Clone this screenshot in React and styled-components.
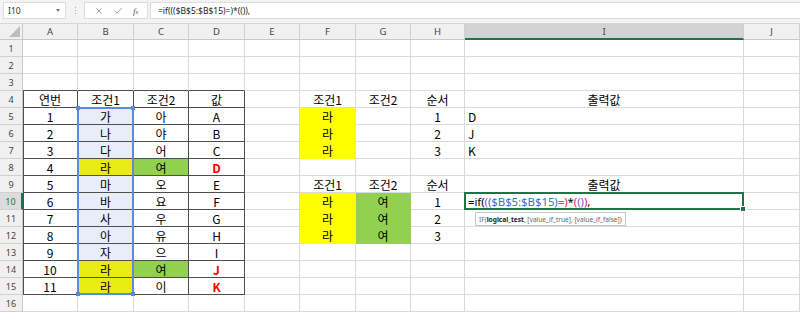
import styled, { createGlobalStyle } from "styled-components";
import { X, Check } from "lucide-react";

const GlobalStyle = createGlobalStyle`
  html, body {
    margin: 0;
    padding: 0;
    background: #fff;
    overflow: hidden;
  }
  body {
    font-family: "Noto Sans", "Noto Sans CJK KR", sans-serif;
  }
`;

const COLS = ["A", "B", "C", "D", "E", "F", "G", "H", "I", "J"];
const WIDTHS = [55, 56, 55, 56, 55, 56, 55, 54, 279, 56];
const ROWS = 16;

const GRID = "#dadada";
const TABLE_LINE = "#4f4f4f";
const YELLOW = "#ffff00";
const YELLOW_SEL = "#ebeb14";
const GREEN = "#92d050";
const BLUE_SEL = "#e8eef9";
const EXCEL_GREEN = "#217346";

const Page = styled.div`
  width: 800px;
  height: 313px;
  overflow: hidden;
  background: #fff;
`;

const FormulaBar = styled.div`
  display: flex;
  align-items: center;
  height: 24px;
  padding: 0 0 2px 3px;
  box-sizing: border-box;
  background: #f3f3f3;
  border-bottom: 1px solid #d6d6d6;
`;

const NameBox = styled.div`
  display: flex;
  align-items: center;
  justify-content: space-between;
  width: 63px;
  height: 17px;
  padding: 0 5px 0 4px;
  box-sizing: border-box;
  background: #fff;
  border: 1px solid #dcdcdc;
  font-family: "Noto Sans", sans-serif;
  font-size: 8.5px;
  color: #333;
`;

const Caret = styled.span`
  width: 0;
  height: 0;
  border-left: 2.5px solid transparent;
  border-right: 2.5px solid transparent;
  border-top: 3px solid #777;
`;

const Grip = styled.div`
  display: flex;
  flex-direction: column;
  align-items: center;
  justify-content: center;
  gap: 2px;
  width: 18px;
  & span {
    width: 1px;
    height: 1px;
    background: #a8a8a8;
  }
`;

const ButtonBox = styled.div`
  display: flex;
  align-items: center;
  justify-content: space-around;
  width: 64px;
  height: 17px;
  padding: 0 4px;
  box-sizing: border-box;
  background: #fff;
  border: 1px solid #dcdcdc;
  color: #6a6a6a;
`;

const Fx = styled.span`
  font-family: "Liberation Serif", serif;
  font-style: italic;
  font-size: 9px;
  color: #555;
  & small {
    font-size: 6px;
  }
`;

const FormulaInput = styled.div`
  flex: 1;
  display: flex;
  align-items: center;
  height: 17px;
  margin-left: 2px;
  padding-left: 7px;
  box-sizing: border-box;
  background: #fff;
  border: 1px solid #dcdcdc;
  border-right: none;
  font-family: "Noto Sans", sans-serif;
  font-size: 8.5px;
  color: #222;
`;

const Sheet = styled.div`
  display: grid;
  grid-template-columns: 23px ${WIDTHS.map((w) => `${w}px`).join(" ")};
  grid-template-rows: 16px repeat(${ROWS}, 17px);
`;

const Corner = styled.div`
  grid-column: 1;
  grid-row: 1;
  position: relative;
  background: #f0f0f0;
  border-right: 1px solid #c8c8c8;
  border-bottom: 1px solid #c8c8c8;
  box-sizing: border-box;
  &::after {
    content: "";
    position: absolute;
    right: 2px;
    bottom: 2px;
    border-left: 11px solid transparent;
    border-bottom: 11px solid #bdbdbd;
  }
`;

const ColHead = styled.div`
  grid-column: ${(p) => p.$c};
  grid-row: 1;
  display: flex;
  align-items: center;
  justify-content: center;
  background: ${(p) => (p.$active ? "#d3d3d3" : "#f0f0f0")};
  border-right: 1px solid #d0d0d0;
  border-bottom: ${(p) =>
    p.$active ? `2px solid ${EXCEL_GREEN}` : "1px solid #c8c8c8"};
  box-sizing: border-box;
  font-family: "Noto Sans", sans-serif;
  font-size: 9.5px;
  color: #444;
`;

const RowHead = styled.div`
  grid-column: 1;
  grid-row: ${(p) => p.$r};
  display: flex;
  align-items: center;
  justify-content: center;
  background: ${(p) => (p.$active ? "#dcdcdc" : "#f0f0f0")};
  border-right: ${(p) =>
    p.$active ? `2px solid ${EXCEL_GREEN}` : "1px solid #c8c8c8"};
  border-bottom: 1px solid #d0d0d0;
  box-sizing: border-box;
  font-family: "Noto Sans", sans-serif;
  font-size: 9px;
  color: ${(p) => (p.$active ? EXCEL_GREEN : "#444")};
`;

const Cell = styled.div`
  grid-column: ${(p) => p.$c};
  grid-row: ${(p) => p.$r};
  display: flex;
  align-items: center;
  justify-content: ${(p) => (p.$left ? "flex-start" : "center")};
  padding: 1px 3px 0;
  min-width: 0;
  box-sizing: border-box;
  white-space: nowrap;
  background: ${(p) => p.$fill};
  border-right: 1px solid ${(p) => p.$lineR};
  border-bottom: 1px solid ${(p) => p.$lineB};
  box-shadow: ${(p) => (p.$edge ? `inset 1px 0 0 ${TABLE_LINE}` : "none")};
  font-family: "Noto Sans CJK KR", "Noto Sans", sans-serif;
  font-size: 12px;
  font-weight: ${(p) => (p.$bold ? 700 : 400)};
  color: ${(p) => p.$color};
`;

const RangeMark = styled.div`
  grid-column: ${(p) => p.$col};
  grid-row: ${(p) => p.$rows};
  position: relative;
  margin: -1px 0 0 -1px;
  border: ${(p) => p.$width}px solid ${(p) => p.$color};
  pointer-events: none;
  z-index: 2;
`;

const Handle = styled.span`
  position: absolute;
  width: 4px;
  height: 4px;
  background: ${(p) => p.$color};
  ${(p) => (p.$top ? "top: -3px;" : "bottom: -3px;")}
  ${(p) => (p.$leftSide ? "left: -3px;" : "right: -3px;")}
  outline: ${(p) => (p.$ring ? "1px solid #fff" : "none")};
`;

const FormulaText = styled.span`
  font-family: "Noto Sans", "Noto Sans CJK KR", sans-serif;
  font-size: 11.5px;
  letter-spacing: -0.1px;
  & b {
    font-weight: 400;
  }
`;

const ArgTip = styled.div`
  grid-column: 10;
  grid-row: 12;
  align-self: start;
  justify-self: start;
  margin: 2px 0 0 10px;
  padding: 0 3px;
  height: 12px;
  display: flex;
  align-items: center;
  background: #fff;
  border: 1px solid #c6c6c6;
  font-family: "Noto Sans", sans-serif;
  font-size: 6.6px;
  color: #666;
  white-space: nowrap;
  z-index: 3;
  & strong {
    color: #222;
    font-weight: 700;
  }
`;

const FORMULA = [
  ["=if(", "#000"],
  ["(", "#8a4fc9"],
  ["(", "#3d6fd1"],
  ["$B$5:$B$15", "#3d6fd1"],
  [")", "#3d6fd1"],
  ["=", "#8a4fc9"],
  [")", "#e0245e"],
  ["*", "#000"],
  ["(", "#e0245e"],
  ["()", "#8a4fc9"],
  [")", "#e0245e"],
  [",", "#000"],
];

const data = {};
const put = (ref, v, opts = {}) => {
  data[ref] = { v, ...opts };
};

["연번", "조건1", "조건2", "값"].forEach((t, i) => put(`${COLS[i]}4`, t));
const colB = ["가", "나", "다", "라", "마", "바", "사", "아", "자", "라", "라"];
const colC = ["아", "야", "어", "여", "오", "요", "우", "유", "으", "여", "이"];
const colD = "ABCDEFGHIJK".split("");
colB.forEach((t, i) => {
  const r = i + 5;
  put(`A${r}`, i + 1);
  put(`B${r}`, t, { fill: t === "라" ? YELLOW_SEL : BLUE_SEL });
  put(`C${r}`, colC[i], colC[i] === "여" ? { fill: GREEN } : {});
  const red = ["D", "J", "K"].includes(colD[i]);
  put(`D${r}`, colD[i], red ? { color: "#ff0000", bold: true } : {});
});

[4, 9].forEach((r) => {
  put(`F${r}`, "조건1");
  put(`G${r}`, "조건2");
  put(`H${r}`, "순서");
  put(`I${r}`, "출력값");
});
["D", "J", "K"].forEach((t, i) => {
  put(`F${5 + i}`, "라", { fill: YELLOW });
  put(`H${5 + i}`, i + 1);
  put(`I${5 + i}`, t, { left: true });
});
[0, 1, 2].forEach((i) => {
  put(`F${10 + i}`, "라", { fill: YELLOW });
  put(`G${10 + i}`, "여", { fill: GREEN });
  put(`H${10 + i}`, i + 1);
});
put(
  "I10",
  <FormulaText>
    {FORMULA.map(([t, c], i) => (
      <b key={i} style={{ color: c }}>
        {t}
      </b>
    ))}
  </FormulaText>,
  { left: true }
);

const inTable = (r, ci) => r >= 4 && r <= 15 && ci >= 0 && ci <= 3;

function SheetCell({ r, ci }) {
  const ref = `${COLS[ci]}${r}`;
  const d = data[ref] || {};
  const fill = d.fill || "#fff";
  const lineR = inTable(r, ci) ? TABLE_LINE : d.fill ? fill : GRID;
  const lineB =
    inTable(r, ci) || inTable(r + 1, ci) ? TABLE_LINE : d.fill ? fill : GRID;
  return (
    <Cell
      $c={ci + 2}
      $r={r + 1}
      $fill={fill}
      $lineR={lineR}
      $lineB={lineB}
      $edge={ci === 0 && inTable(r, ci)}
      $left={d.left}
      $bold={d.bold}
      $color={d.color || "#000"}
    >
      {d.v}
    </Cell>
  );
}

export default function App() {
  const rows = Array.from({ length: ROWS }, (_, i) => i + 1);
  return (
    <Page>
      <GlobalStyle />
      <FormulaBar>
        <NameBox>
          I10
          <Caret />
        </NameBox>
        <Grip>
          <span />
          <span />
          <span />
        </Grip>
        <ButtonBox>
          <X size={10} strokeWidth={1.4} />
          <Check size={10} strokeWidth={1.6} />
          <Fx>
            f<small>x</small>
          </Fx>
        </ButtonBox>
        <FormulaInput>=if((($B$5:$B$15)=)*(()),</FormulaInput>
      </FormulaBar>

      <Sheet>
        <Corner />
        {COLS.map((c, ci) => (
          <ColHead key={c} $c={ci + 2} $active={c === "I"}>
            {c}
          </ColHead>
        ))}
        {rows.map((r) => [
          <RowHead key={`h${r}`} $r={r + 1} $active={r === 10}>
            {r}
          </RowHead>,
          ...COLS.map((c, ci) => <SheetCell key={`${c}${r}`} r={r} ci={ci} />),
        ])}

        <RangeMark $col={3} $rows="6 / 17" $width={2} $color="#5b8ad8">
          <Handle $top $leftSide $color="#5b8ad8" />
          <Handle $top $color="#5b8ad8" />
          <Handle $leftSide $color="#5b8ad8" />
          <Handle $color="#5b8ad8" />
        </RangeMark>

        <RangeMark $col={10} $rows="11 / 12" $width={2} $color={EXCEL_GREEN}>
          <Handle $color={EXCEL_GREEN} $ring />
        </RangeMark>

        <ArgTip>
          IF(<strong>logical_test</strong>, [value_if_true], [value_if_false])
        </ArgTip>
      </Sheet>
    </Page>
  );
}
